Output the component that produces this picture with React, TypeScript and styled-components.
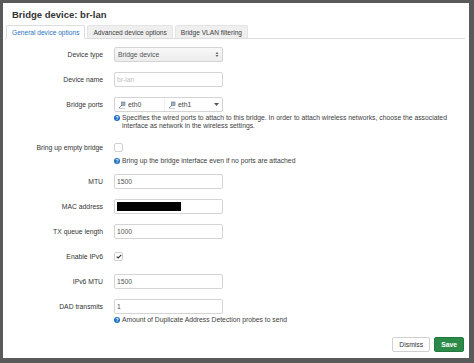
import { createGlobalStyle, styled } from "styled-components";

const GlobalStyle = createGlobalStyle`
  html, body {
    margin: 0;
    padding: 0;
    background: #5a5a5a;
  }
  body {
    font-family: "Liberation Sans", Arial, sans-serif;
    font-size: 6.8px;
    color: #333;
  }
`;

const Frame = styled.div`
  width: 474px;
  height: 363px;
  padding: 3px 5px 5px 3px;
  box-sizing: border-box;
`;

const Dialog = styled.div`
  background: #fff;
  height: 355px;
  padding: 0 4px 0 2px;
  box-sizing: border-box;
  display: flex;
  flex-direction: column;
`;

const Title = styled.h3`
  margin: 5px 0 0;
  padding-left: 7px;
  font-size: 9.5px;
  line-height: 13px;
  font-weight: bold;
  color: #333;
`;

const TabBar = styled.ul`
  list-style: none;
  margin: 4px 0 0;
  padding: 0 0 0 1px;
  display: flex;
  gap: 2px;
  border-bottom: 1px solid #ddd;
  height: 13px;
`;

const Tab = styled.li<{ $active?: boolean }>`
  padding: 0 5px;
  font-size: 6.6px;
  line-height: 13px;
  border: 1px solid ${(p) => (p.$active ? "#ddd" : "#e4e4e4")};
  border-bottom-color: ${(p) => (p.$active ? "#fff" : "#ddd")};
  border-radius: 2px 2px 0 0;
  background: ${(p) => (p.$active ? "#fff" : "#efefef")};
  color: ${(p) => (p.$active ? "#2a72c0" : "#404040")};
  box-sizing: border-box;
  height: 14px;
  white-space: nowrap;
`;

const Form = styled.div`
  padding-top: 8px;
  display: flex;
  flex-direction: column;
`;

const Row = styled.div<{ $afterHelp?: boolean }>`
  display: grid;
  grid-template-columns: 98px 1fr;
  column-gap: 11px;
  margin-top: ${(p) => (p.$afterHelp ? "9px" : "10px")};
  &:first-child {
    margin-top: 0;
  }
`;

const Label = styled.label`
  text-align: right;
  line-height: 15px;
  color: #333;
  white-space: nowrap;
`;

const Field = styled.div`
  display: flex;
  flex-direction: column;
  align-items: flex-start;
  min-width: 0;
`;

const TextInput = styled.input`
  width: 109px;
  height: 15px;
  box-sizing: border-box;
  border: 1px solid #d4d4d4;
  border-radius: 2px;
  padding: 0 2px;
  margin: 0;
  font-family: inherit;
  font-size: 6.8px;
  color: #555;
  background: #fff;
  outline: none;
  &::placeholder {
    color: #c0c0c0;
  }
`;

const MaskedInput = styled.div`
  width: 109px;
  height: 15px;
  box-sizing: border-box;
  border: 1px solid #d4d4d4;
  border-radius: 2px;
  padding: 2px 2px;
  display: flex;
`;

const Redaction = styled.div`
  width: 64px;
  height: 9px;
  background: #000;
`;

const Select = styled.div`
  width: 109px;
  height: 15px;
  box-sizing: border-box;
  border: 1px solid #d4d4d4;
  border-radius: 2px;
  padding: 0 3px 0 3px;
  background: linear-gradient(#f8f8f8, #ececec);
  color: #555;
  display: flex;
  align-items: center;
  justify-content: space-between;
`;

const PortBox = styled.div`
  width: 109px;
  height: 15px;
  box-sizing: border-box;
  border: 1px solid #d4d4d4;
  border-radius: 2px;
  display: flex;
  align-items: center;
  color: #444;
`;

const PortItem = styled.span<{ $divided?: boolean }>`
  display: flex;
  align-items: center;
  gap: 2px;
  height: 100%;
  width: 49px;
  padding-left: 3px;
  box-sizing: border-box;
  border-left: ${(p) => (p.$divided ? "1px solid #eee" : "none")};
`;

const Caret = styled.span`
  margin-left: auto;
  margin-right: 3px;
  display: flex;
`;

const Help = styled.div`
  display: flex;
  align-items: flex-start;
  gap: 2px;
  margin-top: 2px;
  line-height: 8px;
  color: #404040;
`;

const HelpIcon = styled.span`
  flex: none;
  width: 6px;
  height: 6px;
  margin-top: 1px;
  border-radius: 50%;
  background: #1f6fbf;
  color: #fff;
  font-size: 5px;
  font-weight: bold;
  line-height: 6px;
  text-align: center;
`;

const CheckRow = styled.div`
  height: 15px;
  display: flex;
  align-items: center;
`;

const Checkbox = styled.span`
  width: 9px;
  height: 9px;
  box-sizing: border-box;
  border: 1px solid #d0d0d0;
  border-radius: 2px;
  background: #fff;
  display: flex;
  align-items: center;
  justify-content: center;
`;

const Footer = styled.div`
  margin-top: auto;
  margin-bottom: 6px;
  display: flex;
  justify-content: flex-end;
  gap: 4px;
  padding-right: 1px;
`;

const Button = styled.button<{ $primary?: boolean }>`
  height: 15px;
  padding: 0 6px;
  margin: 0;
  font-family: inherit;
  font-size: 6.8px;
  border-radius: 2px;
  border: 1px solid ${(p) => (p.$primary ? "#237a3f" : "#d0d0d0")};
  background: ${(p) => (p.$primary ? "#2b8a48" : "#fff")};
  color: ${(p) => (p.$primary ? "#fff" : "#333")};
  font-weight: ${(p) => (p.$primary ? "bold" : "normal")};
`;

function PortIcon() {
  return (
    <svg width="8" height="8" viewBox="0 0 8 8">
      <path d="M1 7 L4 4" stroke="#7a8fa3" strokeWidth="1" />
      <rect x="3.5" y="1" width="3.5" height="3.5" fill="#9fb4c8" stroke="#5d7186" strokeWidth="0.6" />
      <path d="M1 7.5 H7" stroke="#b0b0b0" strokeWidth="0.6" />
    </svg>
  );
}

function UpDown() {
  return (
    <svg width="4" height="7" viewBox="0 0 4 7">
      <path d="M0.5 3 L2 1 L3.5 3 Z M0.5 4 L2 6 L3.5 4 Z" fill="#666" />
    </svg>
  );
}

function DownCaret() {
  return (
    <svg width="5" height="3" viewBox="0 0 5 3">
      <path d="M0 0 H5 L2.5 3 Z" fill="#555" />
    </svg>
  );
}

function Tick() {
  return (
    <svg width="6" height="5" viewBox="0 0 6 5">
      <path d="M0.7 2.6 L2.2 4 L5.3 0.8" stroke="#333" strokeWidth="1.1" fill="none" />
    </svg>
  );
}

function HelpText({ children }: { children: React.ReactNode }) {
  return (
    <Help>
      <HelpIcon>?</HelpIcon>
      <span>{children}</span>
    </Help>
  );
}

export default function App() {
  return (
    <>
      <GlobalStyle />
      <Frame>
        <Dialog>
          <Title>Bridge device: br-lan</Title>
          <TabBar>
            <Tab $active>General device options</Tab>
            <Tab>Advanced device options</Tab>
            <Tab>Bridge VLAN filtering</Tab>
          </TabBar>

          <Form>
            <Row>
              <Label>Device type</Label>
              <Field>
                <Select>
                  <span>Bridge device</span>
                  <UpDown />
                </Select>
              </Field>
            </Row>

            <Row>
              <Label>Device name</Label>
              <Field>
                <TextInput readOnly placeholder="br-lan" />
              </Field>
            </Row>

            <Row>
              <Label>Bridge ports</Label>
              <Field>
                <PortBox>
                  <PortItem>
                    <PortIcon />
                    eth0
                  </PortItem>
                  <PortItem $divided>
                    <PortIcon />
                    eth1
                  </PortItem>
                  <Caret>
                    <DownCaret />
                  </Caret>
                </PortBox>
                <HelpText>
                  Specifies the wired ports to attach to this bridge. In order to attach wireless
                  networks, choose the associated interface as network in the wireless settings.
                </HelpText>
              </Field>
            </Row>

            <Row>
              <Label>Bring up empty bridge</Label>
              <Field>
                <CheckRow>
                  <Checkbox />
                </CheckRow>
                <HelpText>Bring up the bridge interface even if no ports are attached</HelpText>
              </Field>
            </Row>

            <Row $afterHelp>
              <Label>MTU</Label>
              <Field>
                <TextInput readOnly defaultValue="1500" />
              </Field>
            </Row>

            <Row>
              <Label>MAC address</Label>
              <Field>
                <MaskedInput>
                  <Redaction />
                </MaskedInput>
              </Field>
            </Row>

            <Row>
              <Label>TX queue length</Label>
              <Field>
                <TextInput readOnly defaultValue="1000" />
              </Field>
            </Row>

            <Row>
              <Label>Enable IPv6</Label>
              <Field>
                <CheckRow>
                  <Checkbox>
                    <Tick />
                  </Checkbox>
                </CheckRow>
              </Field>
            </Row>

            <Row>
              <Label>IPv6 MTU</Label>
              <Field>
                <TextInput readOnly defaultValue="1500" />
              </Field>
            </Row>

            <Row>
              <Label>DAD transmits</Label>
              <Field>
                <TextInput readOnly defaultValue="1" />
                <HelpText>Amount of Duplicate Address Detection probes to send</HelpText>
              </Field>
            </Row>
          </Form>

          <Footer>
            <Button>Dismiss</Button>
            <Button $primary>Save</Button>
          </Footer>
        </Dialog>
      </Frame>
    </>
  );
}
